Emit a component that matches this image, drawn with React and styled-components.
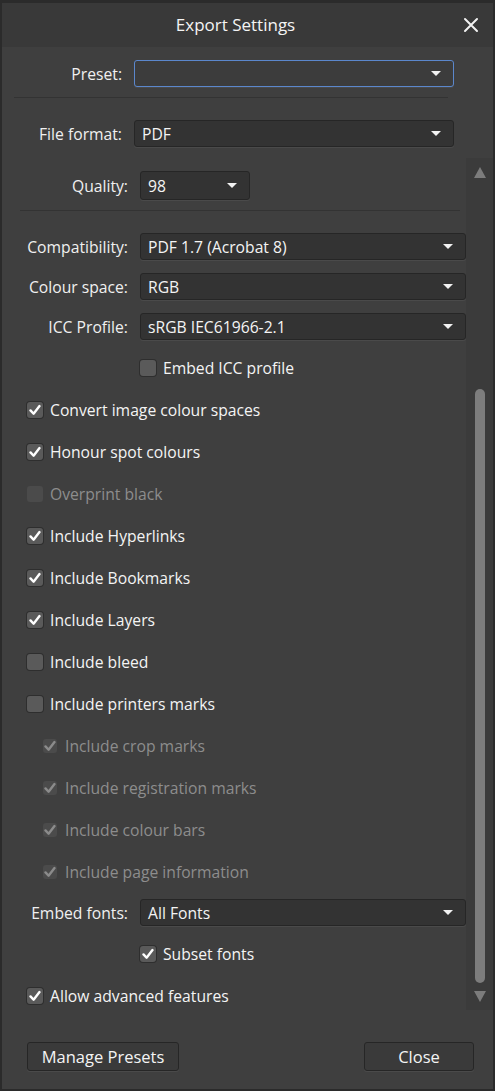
import React from 'react'
import styled, { createGlobalStyle } from 'styled-components'

const GlobalStyle = createGlobalStyle`
  html, body {
    margin: 0;
    padding: 0;
    background: #2b2b2b;
  }
  * { box-sizing: border-box; }
`;

const UI_FONT = `"Open Sans", "Noto Sans", sans-serif`;

const Check = ({ color }) => (
  <svg width="12" height="12" viewBox="0 0 12 12">
    <path d="M1.5 6.4 L4.6 9.7 L10.5 2.1" fill="none" stroke={color} strokeWidth="2.4" strokeLinecap="round" strokeLinejoin="round" />
  </svg>
)

const Checkbox = ({ checked, disabled, label, indent }) => (
  <CheckRow $indent={indent}>
    <Box $disabled={disabled} $small={indent === 'sub'}>
      {checked && <Check color={disabled ? '#8b8b8b' : '#ffffff'} />}
    </Box>
    <CheckLabel $disabled={disabled}>{label}</CheckLabel>
  </CheckRow>
)

const Select = ({ value, focused, width }) => (
  <SelectBox $focused={focused} $width={width}>
    <span>{value}</span>
    <Caret />
  </SelectBox>
)

const App = () => {
  return (
    <>
      <GlobalStyle />
      <Window>
        <TitleBar>
          <span />
          <Title>Export Settings</Title>
          <CloseButton>
            <svg width="16" height="16" viewBox="0 0 16 16">
              <path d="M2 2 L14 14 M14 2 L2 14" stroke="#f2f2f2" strokeWidth="2" strokeLinecap="round" />
            </svg>
          </CloseButton>
        </TitleBar>

        <Body>
          <Header>
            <FieldRow>
              <FieldLabel>Preset:</FieldLabel>
              <Select value="" focused />
            </FieldRow>
            <Separator $inset="10px 6px 22px 0" />
            <FieldRow>
              <FieldLabel>File format:</FieldLabel>
              <Select value="PDF" />
            </FieldRow>
          </Header>

          <ScrollArea>
            <Content>
              <FieldRow $wide>
                <FieldLabel>Quality:</FieldLabel>
                <Select value="98" width="110px" />
              </FieldRow>
              <Separator $inset="10px 6px 22px 4px" />
              <Stack>
                <FieldRow $wide>
                  <FieldLabel>Compatibility:</FieldLabel>
                  <Select value="PDF 1.7 (Acrobat 8)" />
                </FieldRow>
                <FieldRow $wide>
                  <FieldLabel>Colour space:</FieldLabel>
                  <Select value="RGB" />
                </FieldRow>
                <FieldRow $wide>
                  <FieldLabel>ICC Profile:</FieldLabel>
                  <Select value="sRGB IEC61966-2.1" />
                </FieldRow>
              </Stack>

              <Gap $h={7} />
              <Checkbox indent="field" label="Embed ICC profile" />
              <Checkbox checked label="Convert image colour spaces" />
              <Checkbox checked label="Honour spot colours" />
              <Checkbox disabled label="Overprint black" />
              <Checkbox checked label="Include Hyperlinks" />
              <Checkbox checked label="Include Bookmarks" />
              <Checkbox checked label="Include Layers" />
              <Checkbox label="Include bleed" />
              <Checkbox label="Include printers marks" />
              <Checkbox indent="sub" checked disabled label="Include crop marks" />
              <Checkbox indent="sub" checked disabled label="Include registration marks" />
              <Checkbox indent="sub" checked disabled label="Include colour bars" />
              <Checkbox indent="sub" checked disabled label="Include page information" />

              <Gap $h={6} />
              <FieldRow $wide>
                <FieldLabel>Embed fonts:</FieldLabel>
                <Select value="All Fonts" />
              </FieldRow>
              <Gap $h={7} />
              <Checkbox indent="field" checked label="Subset fonts" />
              <Checkbox checked label="Allow advanced features" />
            </Content>

            <Scrollbar>
              <Arrow $dir="up" />
              <Thumb />
              <Arrow $dir="down" />
            </Scrollbar>
          </ScrollArea>

          <Footer>
            <Button $width="152px">Manage Presets</Button>
            <Button $width="110px">Close</Button>
          </Footer>
        </Body>
      </Window>
    </>
  )
}

const Window = styled.div`
  width: 495px;
  height: 1091px;
  display: flex;
  flex-direction: column;
  border-style: solid;
  border-color: #2b2b2b;
  border-width: 3px 2px 2px 2px;
  font-family: ${UI_FONT};
  color: #f0f0f0;
  overflow: hidden;
`;

const TitleBar = styled.div`
  height: 44px;
  flex: none;
  background: #393939;
  display: grid;
  grid-template-columns: 1fr auto 1fr;
  align-items: center;
  padding-right: 14px;
`;

const Title = styled.div`
  font-size: 17px;
  color: #f4f4f4;
  margin: -1px 10px 0 0;
`;

const CloseButton = styled.div`
  justify-self: end;
  display: flex;
  align-items: center;
  margin-top: -1px;
`;

const Body = styled.div`
  flex: 1;
  display: flex;
  flex-direction: column;
  background: #3f3f3f;
`;

const Header = styled.div`
  height: 111px;
  flex: none;
  padding: 13px 39px 0 12px;
`;

const FieldRow = styled.div`
  display: grid;
  grid-template-columns: ${p => (p.$wide ? '112px' : '108px')} 1fr;
  column-gap: 12px;
  align-items: center;
`;

const FieldLabel = styled.div`
  font-size: 15.7px;
  text-align: right;
  color: #f0f0f0;
  white-space: nowrap;
`;

const SelectBox = styled.div`
  height: ${p => (p.$width ? '29px' : '27px')};
  width: ${p => p.$width || 'auto'};
  display: flex;
  align-items: center;
  justify-content: space-between;
  padding: 0 12px 0 7px;
  border-radius: 3px;
  font-size: 15.7px;
  color: #f4f4f4;
  background: ${p => (p.$focused ? '#3c3c3c' : '#333333')};
  border: ${p => (p.$focused ? '1.5px solid #5b87cc' : '1px solid #262626')};
  box-shadow: 0 1px 0 #4a4a4a;
`;

const Caret = styled.span`
  width: 0;
  height: 0;
  border-left: 5px solid transparent;
  border-right: 5px solid transparent;
  border-top: 5px solid #f2f2f2;
`;

const Separator = styled.div`
  height: 1px;
  background: #333333;
  margin: ${p => p.$inset};
`;

const ScrollArea = styled.div`
  height: 852px;
  flex: none;
  display: flex;
  overflow: hidden;
`;

const Content = styled.div`
  flex: 1;
  padding: 13px 0 0 14px;
  overflow: hidden;
`;

const Stack = styled.div`
  display: flex;
  flex-direction: column;
  gap: 13px;
`;

const Gap = styled.div`
  height: ${p => p.$h}px;
`;

const CheckRow = styled.div`
  height: 42px;
  display: flex;
  align-items: center;
  gap: 7px;
  padding-left: ${p => (p.$indent === 'field' ? '124px' : p.$indent === 'sub' ? '27px' : '11px')};
`;

const Box = styled.div`
  width: ${p => (p.$small ? '14px' : '16px')};
  height: ${p => (p.$small ? '14px' : '16px')};
  margin-right: ${p => (p.$small ? '1px' : '0')};
  border-radius: 3px;
  display: flex;
  align-items: center;
  justify-content: center;
  background: ${p => (p.$disabled ? '#4b4b4b' : '#5a5a5a')};
  box-shadow: ${p => (p.$disabled ? 'none' : '0 0 0 1px #2e2e2e')};
`;

const CheckLabel = styled.span`
  font-size: 15.7px;
  color: ${p => (p.$disabled ? '#8d8d8d' : '#f4f4f4')};
  white-space: nowrap;
`;

const Scrollbar = styled.div`
  width: 27px;
  flex: none;
  background: #3b3b3b;
  display: flex;
  flex-direction: column;
  align-items: center;
  padding: 9px 0 8px;
`;

const Arrow = styled.div`
  width: 0;
  height: 0;
  border-left: 6px solid transparent;
  border-right: 6px solid transparent;
  ${p => (p.$dir === 'up'
    ? 'border-bottom: 11px solid #7c7c7c;'
    : 'border-top: 11px solid #7c7c7c;')}
`;

const Thumb = styled.div`
  width: 10px;
  height: 594px;
  margin: 211px 0 auto;
  border-radius: 5px;
  background: #7d7d7d;
`;

const Footer = styled.div`
  flex: 1;
  display: flex;
  justify-content: space-between;
  align-items: flex-start;
  padding: 32px 19px 0 25px;
`;

const Button = styled.div`
  width: ${p => p.$width};
  height: 29px;
  display: flex;
  align-items: center;
  justify-content: center;
  border-radius: 3px;
  border: 1px solid #262626;
  background: #3a3a3a;
  box-shadow: 0 1px 0 #4a4a4a;
  font-size: 16.5px;
  color: #f4f4f4;
`;

export default App
